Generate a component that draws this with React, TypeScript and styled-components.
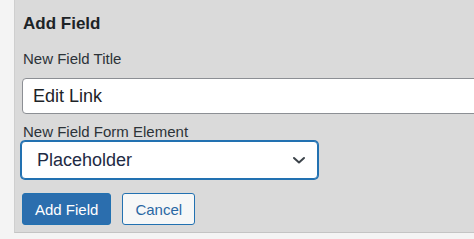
import React from "react";
import styled, { createGlobalStyle } from "styled-components";

const GlobalStyle = createGlobalStyle`
  html, body {
    margin: 0;
    padding: 0;
    background: #f4f4f4;
    overflow: hidden;
  }
  body {
    font-family: "Liberation Sans", Arial, sans-serif;
  }
`;

const Page = styled.div`
  width: 474px;
  height: 239px;
  padding-left: 14px;
  box-sizing: border-box;
`;

const Panel = styled.div`
  background: #dadada;
  border-left: 1px solid #cfcfcf;
  border-bottom: 1px solid #c4c4c4;
  padding: 14px 0 7px 7px;
  height: 233px;
  box-sizing: border-box;
`;

const Title = styled.h2`
  margin: 0 0 16px 1px;
  font-size: 17px;
  line-height: 20px;
  font-weight: 700;
  color: #1d2327;
`;

const Label = styled.label<{ $gap?: number }>`
  display: block;
  margin: 0 0 ${(p) => p.$gap ?? 0}px 1px;
  font-size: 15px;
  line-height: 18px;
  color: #2c3338;
`;

const TextInput = styled.input`
  display: block;
  box-sizing: border-box;
  width: 460px;
  height: 36px;
  margin: 0 0 9px 0;
  padding: 0 10px;
  border: 1px solid #8c8f94;
  border-radius: 4px;
  background: #fff;
  font-family: inherit;
  font-size: 18px;
  color: #1d2327;
  outline: none;
`;

const SelectBox = styled.div`
  display: flex;
  align-items: center;
  justify-content: space-between;
  box-sizing: border-box;
  width: 297px;
  height: 38px;
  margin-left: -1px;
  padding: 0 11px 0 15px;
  border: 1px solid #2271b1;
  box-shadow: 0 0 0 1px #2271b1;
  border-radius: 4px;
  background: #fff;
  font-size: 18px;
  color: #1e2a44;
`;

const Chevron = styled.svg`
  width: 14px;
  height: 14px;
  color: #3c434a;
`;

const Actions = styled.div`
  display: flex;
  gap: 11px;
  margin-top: 14px;
`;

const Button = styled.button<{ $primary?: boolean }>`
  height: 32px;
  padding: 0 12px;
  box-sizing: border-box;
  border-radius: 3px;
  font-family: inherit;
  font-size: 15px;
  cursor: pointer;
  border: 1px solid #2271b1;
  background: ${(p) => (p.$primary ? "#2b6eae" : "#f6f7f7")};
  color: ${(p) => (p.$primary ? "#ffffff" : "#2a67a3")};
`;

export default function App() {
  return (
    <>
      <GlobalStyle />
      <Page>
        <Panel>
          <Title>Add Field</Title>
          <Label $gap={10}>New Field Title</Label>
          <TextInput defaultValue="Edit Link" />
          <Label>New Field Form Element</Label>
          <SelectBox>
            <span>Placeholder</span>
            <Chevron viewBox="0 0 14 14" fill="none">
              <path
                d="M2 5 L7 9.5 L12 5"
                stroke="currentColor"
                strokeWidth="2"
                strokeLinecap="round"
                strokeLinejoin="round"
              />
            </Chevron>
          </SelectBox>
          <Actions>
            <Button $primary>Add Field</Button>
            <Button>Cancel</Button>
          </Actions>
        </Panel>
      </Page>
    </>
  );
}
